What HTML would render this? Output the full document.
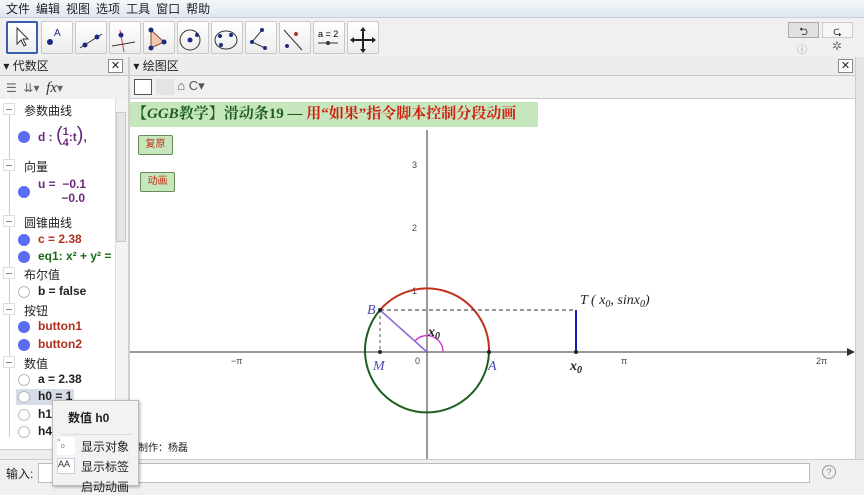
<!DOCTYPE html>
<html><head><meta charset="utf-8"><style>
*{margin:0;padding:0;box-sizing:border-box}
body{width:864px;height:486px;overflow:hidden;background:#f0f0f0;font-family:"Liberation Sans","Noto Sans CJK SC",sans-serif;font-size:12px;position:relative;color:#222}
.abs{position:absolute}
.menu{left:0;top:0;width:864px;height:18px;background:linear-gradient(#f4f7fb,#dfe7f1);border-bottom:1px solid #c8ced6}
.menu span{margin-left:6px;font-size:12px;line-height:18px}
.tb{top:21px;width:32px;height:33px;border:1px solid #c8c8c8;background:linear-gradient(#fff,#ececec);border-radius:2px}
.hdr{height:19px;background:#ececec;border-bottom:1px solid #c8c8c8;font-size:12px;line-height:19px}
.al{font-size:12px;position:absolute;left:24px}
.dot{position:absolute;left:18px;width:12px;height:12px;border-radius:50%;background:#5a6cf0}
.odot{position:absolute;left:18px;width:12px;height:12px;border-radius:50%;border:1px solid #bbb;background:#fff}
.b{font-weight:bold;position:absolute;left:38px;font-size:12px}
.minus{position:absolute;left:3px;width:12px;height:12px;border:1px solid #ddd;background:#fff}
.minus:after{content:"";position:absolute;left:2px;top:5px;width:6px;height:1px;background:#888}
</style></head><body>
<div class="abs menu"><span>文件</span><span>编辑</span><span>视图</span><span>选项</span><span>工具</span><span>窗口</span><span>帮助</span></div>
<div class="abs tb" style="left:6px;border:2px solid #3a5db0"></div>
<div class="abs tb" style="left:41px"></div><div class="abs tb" style="left:75px"></div><div class="abs tb" style="left:109px"></div><div class="abs tb" style="left:143px"></div><div class="abs tb" style="left:177px"></div><div class="abs tb" style="left:211px"></div><div class="abs tb" style="left:245px"></div><div class="abs tb" style="left:279px"></div><div class="abs tb" style="left:313px"></div><div class="abs tb" style="left:347px"></div>
<svg class="abs" style="left:0;top:18px" width="380" height="40">
<path d="M17 10 L17 26 L21 22 L24 28 L26 27 L23 21 L28 21 Z" fill="#fff" stroke="#333"/>
<circle cx="50" cy="24" r="3" fill="#1c2a80"/><text x="54" y="18" font-size="10" fill="#1c2a80">A</text>
<line x1="80" y1="30" x2="102" y2="16" stroke="#333"/><circle cx="85" cy="27" r="2.5" fill="#1c2a80"/><circle cx="97" cy="19" r="2.5" fill="#1c2a80"/>
<line x1="120" y1="12" x2="124" y2="34" stroke="#c44"/><line x1="112" y1="28" x2="135" y2="24" stroke="#333"/><circle cx="121" cy="17" r="2.5" fill="#1c2a80"/>
<path d="M151 12 L164 24 L151 30 Z" fill="#f4c8b0" stroke="#8b4a2a"/><circle cx="151" cy="12" r="2.5" fill="#1c2a80"/><circle cx="164" cy="24" r="2.5" fill="#1c2a80"/><circle cx="151" cy="30" r="2.5" fill="#1c2a80"/>
<circle cx="190" cy="22" r="10" fill="none" stroke="#333"/><circle cx="190" cy="22" r="2.5" fill="#1c2a80"/><circle cx="197" cy="17" r="2" fill="#1c2a80"/>
<ellipse cx="226" cy="22" rx="11" ry="9" fill="none" stroke="#333"/><circle cx="220" cy="18" r="2" fill="#1c2a80"/><circle cx="231" cy="17" r="2" fill="#1c2a80"/><circle cx="221" cy="27" r="2" fill="#1c2a80"/>
<path d="M262 12 L252 24 L265 30" fill="none" stroke="#333"/><circle cx="262" cy="12" r="2" fill="#1c2a80"/><circle cx="252" cy="24" r="2" fill="#1c2a80"/><circle cx="265" cy="30" r="2" fill="#1c2a80"/>
<line x1="284" y1="12" x2="302" y2="32" stroke="#333"/><circle cx="296" cy="16" r="2" fill="#a33"/><circle cx="287" cy="28" r="2" fill="#1c2a80"/>
<text x="318" y="19" font-size="9">a = 2</text><line x1="318" y1="25" x2="338" y2="25" stroke="#333"/><circle cx="328" cy="25" r="2" fill="#333"/>
<path d="M363 11 V33 M352 22 H374" stroke="#222" stroke-width="2"/><path d="M363 9 l-3 4 h6z M363 35 l-3 -4 h6z M350 22 l4 -3 v6z M376 22 l-4 -3 v6z" fill="#222"/>
</svg>
<div class="abs" style="left:788px;top:22px;width:31px;height:16px;border:1px solid #aaa;background:#e0e0e0;font-size:11px;text-align:center">⮌</div>
<div class="abs" style="left:822px;top:22px;width:31px;height:16px;border:1px solid #ccc;background:#f6f6f6;font-size:11px;text-align:center">⮎</div>
<div class="abs" style="left:797px;top:41px;font-size:10px;color:#999">ⓘ</div>
<div class="abs" style="left:832px;top:39px;font-size:12px;color:#777">✲</div>
<div class="abs hdr" style="left:0;top:57px;width:128px">&nbsp;▾ 代数区</div>
<div class="abs" style="left:108px;top:59px;width:15px;height:14px;border:1px solid #888;background:#fff;font-size:11px;line-height:12px;text-align:center">✕</div>
<div class="abs" style="left:0;top:77px;width:128px;height:22px;background:#f0f0f0;font-size:12px;color:#666;padding:3px 6px">☰ &nbsp;⇊▾ &nbsp;<i style="font-family:'Liberation Serif';font-size:15px;color:#333">fx</i>▾</div>
<div class="abs" style="left:0;top:99px;width:115px;height:350px;background:#fff;overflow:hidden">
<div class="abs" style="left:9px;top:14px;width:1px;height:324px;background:#ccc"></div>
<div class="al" style="top:3px">参数曲线</div><div class="minus" style="top:4px"></div>
<div class="dot" style="top:32px"></div><div class="b" style="top:22px;color:#6a2a7a;line-height:28px">d : <span style="font-size:20px;font-weight:normal">(</span><span style="display:inline-block;font-size:11px;line-height:11px;vertical-align:middle;text-align:center">1<br>4</span>:t<span style="font-size:20px;font-weight:normal">)</span>,</div>
<div class="al" style="top:59px">向量</div><div class="minus" style="top:60px"></div>
<div class="dot" style="top:87px"></div><div class="b" style="top:78px;color:#6a2a7a;line-height:14px">u = &nbsp;−0.1<br>&nbsp;&nbsp;&nbsp;&nbsp;&nbsp;&nbsp;&nbsp;−0.0</div>
<div class="al" style="top:115px">圆锥曲线</div><div class="minus" style="top:116px"></div>
<div class="dot" style="top:135px"></div><div class="b" style="top:133px;color:#b03020">c = 2.38</div>
<div class="dot" style="top:152px"></div><div class="b" style="top:150px;color:#1a6a1a">eq1: x² + y² =</div>
<div class="al" style="top:167px">布尔值</div><div class="minus" style="top:168px"></div>
<div class="odot" style="top:187px"></div><div class="b" style="top:185px">b = false</div>
<div class="al" style="top:203px">按钮</div><div class="minus" style="top:204px"></div>
<div class="dot" style="top:222px"></div><div class="b" style="top:220px;color:#b03020">button1</div>
<div class="dot" style="top:240px"></div><div class="b" style="top:238px;color:#b03020">button2</div>
<div class="al" style="top:256px">数值</div><div class="minus" style="top:257px"></div>
<div class="odot" style="top:275px"></div><div class="b" style="top:273px">a = 2.38</div>
<div class="abs" style="left:16px;top:290px;width:58px;height:16px;background:#d6dbe8"></div>
<div class="odot" style="top:292px"></div><div class="b" style="top:290px">h0 = 1</div>
<div class="odot" style="top:310px"></div><div class="b" style="top:308px">h1</div>
<div class="odot" style="top:327px"></div><div class="b" style="top:325px">h4</div>
</div>
<div class="abs" style="left:115px;top:99px;width:12px;height:350px;background:#f4f4f4;border-left:1px solid #ddd"></div>
<div class="abs" style="left:116px;top:112px;width:10px;height:130px;background:#e4e4e4;border:1px solid #c8c8c8"></div>
<div class="abs" style="left:0;top:449px;width:128px;height:10px;background:#eee;border-top:1px solid #ccc"></div>
<div class="abs" style="left:128px;top:57px;width:2px;height:402px;background:#d0d0d0"></div>
<div class="abs hdr" style="left:130px;top:57px;width:725px">&nbsp;▾ 绘图区</div>
<div class="abs" style="left:838px;top:59px;width:15px;height:14px;border:1px solid #888;background:#fff;font-size:11px;line-height:12px;text-align:center">✕</div>
<div class="abs" style="left:130px;top:77px;width:725px;height:22px;background:#f0f0f0;border-bottom:1px solid #ccc;color:#555;font-size:13px;padding:1px 4px">
<span style="display:inline-block;width:18px;height:16px;border:1px solid #555;background:#fff;vertical-align:middle"></span> <span style="display:inline-block;width:18px;height:16px;background:#e4e4e4;vertical-align:middle"></span> ⌂ C▾</div>
<div class="abs" style="left:130px;top:99px;width:725px;height:360px;background:#fff;overflow:hidden">
<svg width="725" height="360" style="position:absolute;left:0;top:0">
<g transform="translate(-130,-99)" font-family="Liberation Sans">
<line x1="130" y1="352" x2="852" y2="352" stroke="#333"/><path d="M855 352 l-8 -4 v8z" fill="#333"/>
<line x1="427" y1="130" x2="427" y2="460" stroke="#333"/>
<g font-size="9" fill="#444"><text x="412" y="168">3</text><text x="412" y="231">2</text><text x="412" y="294">1</text><text x="415" y="364">0</text><text x="231" y="364">−π</text><text x="621" y="364">π</text><text x="816" y="364">2π</text></g>
<path d="M380 310 A62 62 0 1 0 489 352" fill="none" stroke="#1f5e1f" stroke-width="2"/>
<path d="M380 310 A62 62 0 0 1 489 352" fill="none" stroke="#c0301c" stroke-width="2"/>
<line x1="380" y1="310" x2="427" y2="352" stroke="#8f6ad8" stroke-width="1.6"/>
<path d="M443 352 A16 16 0 0 0 415 341" fill="none" stroke="#d040d0" stroke-width="1.5"/>
<line x1="380" y1="310" x2="576" y2="310" stroke="#333" stroke-dasharray="4,3"/>
<line x1="380" y1="310" x2="380" y2="352" stroke="#555" stroke-dasharray="3,3"/>
<line x1="576" y1="310" x2="576" y2="352" stroke="#1020c0" stroke-width="2"/>
<circle cx="380" cy="310" r="2" fill="#222"/><circle cx="380" cy="352" r="2" fill="#222"/><circle cx="489" cy="352" r="2" fill="#222"/><circle cx="576" cy="352" r="2" fill="#222"/>
<g font-family="Liberation Serif" font-style="italic" font-size="14">
<text x="367" y="314" fill="#4a4ab0">B</text><text x="373" y="370" fill="#4a4ab0">M</text><text x="488" y="370" fill="#4a4ab0">A</text>
<text x="428" y="336" font-weight="bold" fill="#222">x<tspan font-size="10" dy="3">0</tspan></text>
<text x="570" y="370" font-weight="bold" fill="#222">x<tspan font-size="10" dy="3">0</tspan></text>
<text x="580" y="304" fill="#222">T ( x<tspan font-size="10" dy="3">0</tspan><tspan dy="-3">, sinx</tspan><tspan font-size="10" dy="3">0</tspan><tspan dy="-3">)</tspan></text>
</g>
</g></svg>
<div class="abs" style="left:0;top:3px;width:408px;height:25px;background:#c6e6bd;font-family:'Liberation Serif','Noto Serif CJK SC',serif;font-size:15px;font-weight:bold;line-height:25px;color:#1f5e1f;padding-left:2px;white-space:nowrap">【<i>GGB</i>教学】滑动条19 — <span style="color:#d02010">用“如果”指令脚本控制分段动画</span></div>
<div class="abs" style="left:8px;top:36px;width:35px;height:20px;border:1px solid #6a8a5a;background:#c6e6bd;border-radius:2px;font-size:10px;color:#c03010;text-align:center;line-height:18px">复原</div>
<div class="abs" style="left:10px;top:73px;width:35px;height:20px;border:1px solid #6a8a5a;background:#c6e6bd;border-radius:2px;font-size:10px;color:#c03010;text-align:center;line-height:18px">动画</div>
<div class="abs" style="left:8px;top:340px;font-size:10px">制作：杨磊</div>
</div>
<div class="abs" style="left:855px;top:57px;width:9px;height:402px;background:#e6e6e6;border-left:1px solid #ccc"></div>
<div class="abs" style="left:0;top:459px;width:864px;height:27px;background:#f0f0f0;border-top:1px solid #ccc"></div>
<div class="abs" style="left:6px;top:465px;font-size:12px">输入:</div>
<div class="abs" style="left:38px;top:463px;width:772px;height:20px;background:#fff;border:1px solid #bbb"></div>
<div class="abs" style="left:822px;top:465px;width:14px;height:14px;border:1px solid #999;border-radius:50%;font-size:9px;color:#888;text-align:center;line-height:12px">?</div>
<div class="abs" style="left:52px;top:400px;width:87px;height:86px;background:#f2f2f2;border:1px solid #bbb;box-shadow:1px 1px 3px rgba(0,0,0,.3)">
<div style="position:absolute;left:15px;top:8px;font-weight:bold;font-size:12px">数值 h0</div>
<div style="position:absolute;left:8px;top:33px;width:72px;height:1px;background:#ddd"></div>
<div style="position:absolute;left:4px;top:36px;width:18px;height:18px;background:#fff;font-size:9px;color:#888">°<sub>o</sub></div>
<div style="position:absolute;left:28px;top:37px;font-size:12px">显示对象</div>
<div style="position:absolute;left:4px;top:57px;width:18px;height:16px;background:#fff;border:1px solid #ccd;font-size:9px;color:#333">AA</div>
<div style="position:absolute;left:28px;top:57px;font-size:12px">显示标签</div>
<div style="position:absolute;left:28px;top:77px;font-size:12px">启动动画</div>
</div>
</body></html>
